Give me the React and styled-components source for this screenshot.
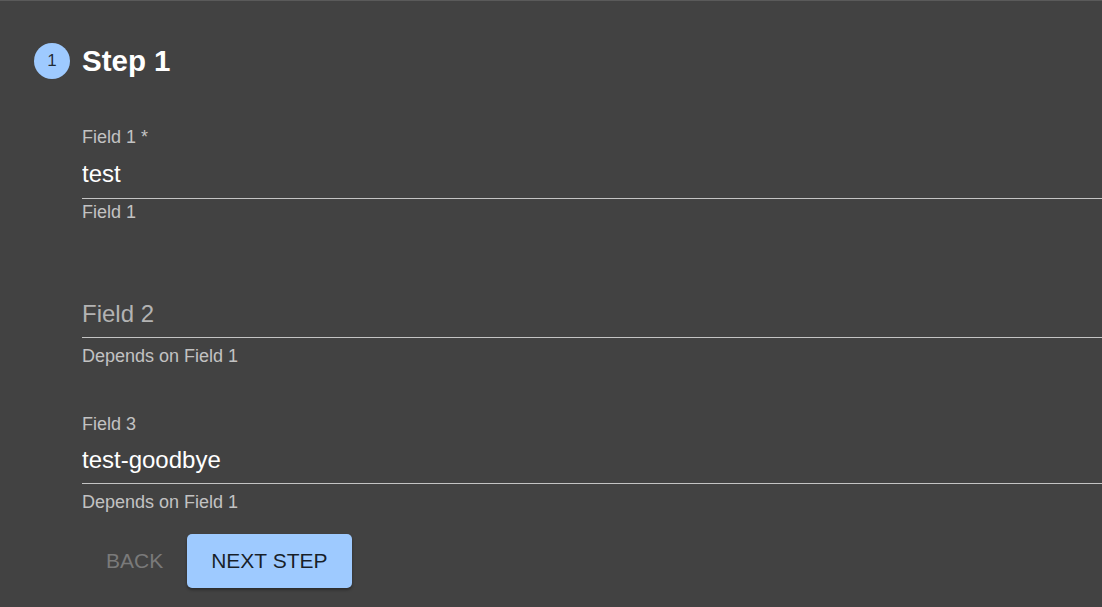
import React from 'react';
import styled, { createGlobalStyle } from 'styled-components';

const GlobalStyle = createGlobalStyle`
  html, body {
    margin: 0;
    padding: 0;
    background: #424242;
  }
  body {
    font-family: 'Liberation Sans', Arial, sans-serif;
    color: #fff;
  }
`

const Page = styled.div`
  min-height: 607px;
  box-sizing: border-box;
  border-top: 1px solid #5a5a5a;
  background: #424242;
  padding-top: 42px;
`

const StepHeader = styled.div`
  display: flex;
  align-items: center;
  gap: 12px;
  padding-left: 34px;
`

const StepIcon = styled.div`
  width: 36px;
  height: 36px;
  border-radius: 50%;
  background: #9ecaff;
  color: rgba(0, 0, 0, 0.8);
  font-size: 17px;
  display: flex;
  align-items: center;
  justify-content: center;
`

const StepTitle = styled.h2`
  margin: 0;
  font-size: 29.5px;
  line-height: 36px;
  font-weight: bold;
  color: #fff;
`

const Content = styled.div`
  padding-left: 82px;
`

const Field = styled.div`
  margin-top: ${p => p.$gap}px;
  display: flex;
  flex-direction: column;
`

const Label = styled.label`
  font-size: 18px;
  line-height: 20px;
  color: #c2c2c2;
  visibility: ${p => p.$hidden ? 'hidden' : 'visible'};
`

const Input = styled.input`
  margin-top: ${p => p.$first ? '13px' : '12px'};
  background: transparent;
  border: 0;
  border-bottom: 1px solid #c4c4c4;
  outline: none;
  padding: 0 0 ${p => p.$first ? '10px' : '9px'};
  font-family: inherit;
  font-size: 24px;
  line-height: 28px;
  height: 28px;
  box-sizing: content-box;
  color: #fff;
  width: 100%;

  &::placeholder {
    color: #b3b3b3;
  }
`

const Helper = styled.div`
  margin-top: ${p => p.$tight ? '3px' : '8px'};
  font-size: 18px;
  line-height: 20px;
  color: #c2c2c2;
`

const Actions = styled.div`
  display: flex;
  align-items: center;
  margin-top: 22px;
`

const Button = styled.button`
  height: 54px;
  padding: 0 24px;
  border: 0;
  border-radius: 5px;
  font-family: inherit;
  font-size: 21px;
  text-transform: uppercase;
  cursor: pointer;
  background: ${p => p.$primary ? '#9ecaff' : 'transparent'};
  color: ${p => p.$primary ? 'rgba(0, 0, 0, 0.85)' : '#7a7a7a'};
  box-shadow: ${p => p.$primary ? '0 2px 3px rgba(0,0,0,0.35)' : 'none'};
`

export default function App() {
  return (
    <Page>
      <GlobalStyle />
      <StepHeader>
        <StepIcon>1</StepIcon>
        <StepTitle>Step 1</StepTitle>
      </StepHeader>
      <Content>
        <Field $gap={48}>
          <Label>Field 1 *</Label>
          <Input $first defaultValue="test" />
          <Helper $tight>Field 1</Helper>
        </Field>
        <Field $gap={46}>
          <Label $hidden>Field 2</Label>
          <Input placeholder="Field 2" />
          <Helper>Depends on Field 1</Helper>
        </Field>
        <Field $gap={48}>
          <Label>Field 3</Label>
          <Input defaultValue="test-goodbye" />
          <Helper>Depends on Field 1</Helper>
        </Field>
        <Actions>
          <Button disabled>Back</Button>
          <Button $primary>Next Step</Button>
        </Actions>
      </Content>
    </Page>
  );
}
